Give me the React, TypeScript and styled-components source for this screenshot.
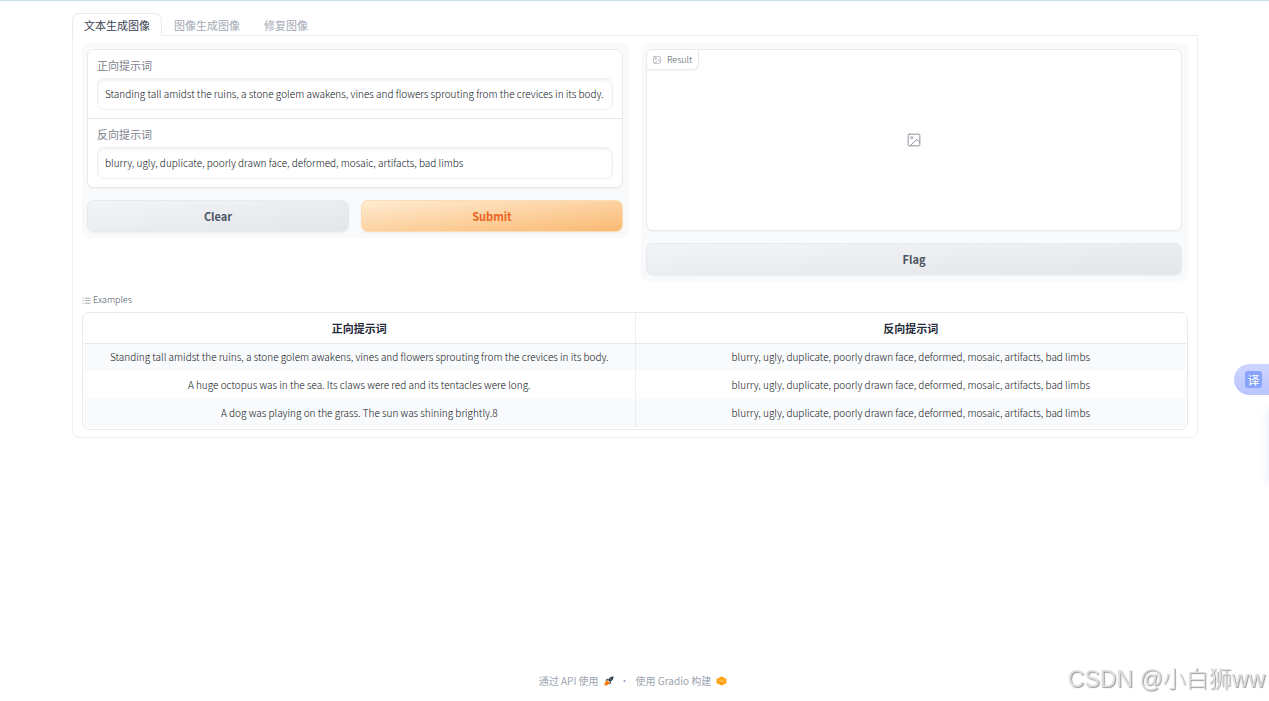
import React from "react";
import styled, { createGlobalStyle } from "styled-components";

const Global = createGlobalStyle`
  *, *::before, *::after { box-sizing: border-box; }
  body { margin: 0; background: #fff; }
  body, button, input {
    font-family: "Noto Sans CJK SC", "Noto Sans", sans-serif;
  }
`;

const Page = styled.div`
  min-height: 100vh;
  display: flex;
  flex-direction: column;
  padding: 12px 71px 12px 72px;
  border-top: 1px solid #cbe0e8;
  color: #374151;
  font-size: 11px;
  line-height: 16px;
`;

const TabList = styled.div`
  display: flex;
  position: relative;
  z-index: 1;
  margin-bottom: -1px;
`;

const Tab = styled.button<{ $active?: boolean }>`
  height: 23px;
  padding: 0 11px;
  border: 1px solid ${(p) => (p.$active ? "#e9ebee" : "transparent")};
  border-bottom: 0;
  border-radius: 7px 7px 0 0;
  background: ${(p) => (p.$active ? "#fff" : "transparent")};
  color: ${(p) => (p.$active ? "#374151" : "#a3a9b4")};
  font-size: 11px;
  line-height: 20px;
`;

const Panel = styled.main`
  border: 1px solid #eceef1;
  border-radius: 0 0 7px 7px;
  padding: 7px 9px;
`;

const Columns = styled.div`
  display: flex;
  align-items: flex-start;
  gap: 12px;
`;

const Group = styled.section`
  flex: 1 1 0;
  min-width: 0;
  display: flex;
  flex-direction: column;
  gap: 12px;
  padding: 6px 6px 6px 5px;
  border-radius: 6px;
  background: #f9fafb;
`;

const Card = styled.div`
  border: 1px solid #e8eaed;
  border-radius: 7px;
  background: #fff;
  overflow: hidden;
  box-shadow: 0 1px 2px rgba(0, 0, 0, 0.04);
`;

const Field = styled.label`
  display: block;
  padding: 7px 9px 8px;
  & + & { border-top: 1px solid #e5e7eb; }
`;

const FieldName = styled.span`
  display: block;
  margin-bottom: 5px;
  color: #7b818c;
`;

const TextInput = styled.input`
  display: block;
  width: 100%;
  height: 32px;
  padding: 0 7px 1px;
  border: 1px solid #eceef1;
  border-radius: 7px;
  box-shadow: inset 0 2px 3px rgba(0, 0, 0, 0.05);
  color: #0b1220;
  background: #fff;
  font-size: 10px;
  font-weight: 300;
`;

const Actions = styled.div`
  display: flex;
  gap: 12px;
`;

const Button = styled.button<{ $primary?: boolean }>`
  flex: 1;
  height: 32px;
  border: 1px solid ${(p) => (p.$primary ? "#fbdcb4" : "#e8eaed")};
  border-radius: 7px;
  background: ${(p) =>
    p.$primary
      ? "linear-gradient(to bottom right, #ffecd2, #fab972)"
      : "linear-gradient(to bottom right, #f3f4f6, #e4e5e9)"};
  color: ${(p) => (p.$primary ? "#ea6420" : "#4b5563")};
  box-shadow: 0 1px 2px rgba(0, 0, 0, 0.05);
  font-size: 11px;
  font-weight: 600;
  line-height: 20px;
`;

const Result = styled(Card)`
  position: relative;
  height: 182px;
  display: grid;
  place-items: center;
  color: #8d929c;
`;

const ResultLabel = styled.div`
  position: absolute;
  top: 0;
  left: 0;
  display: flex;
  align-items: center;
  gap: 6px;
  height: 20px;
  padding: 0 6px;
  border: solid #e8eaed;
  border-width: 0 1px 1px 0;
  border-radius: 0 0 6px 0;
  box-shadow: 0 1px 2px rgba(0, 0, 0, 0.05);
  color: #4b5563;
  font-size: 9px;
  font-weight: 300;
`;

const ExamplesLabel = styled.div`
  display: flex;
  align-items: center;
  gap: 2px;
  margin: 11px 0 4px;
  color: #4b5563;
  font-size: 9px;
  font-weight: 300;
`;

const TableFrame = styled.div`
  border: 1px solid #e9ebee;
  border-radius: 7px;
  overflow: hidden;
  padding: 0 1px 1px;
`;

const Table = styled.table`
  width: 100%;
  border-collapse: collapse;
  table-layout: fixed;
  text-align: center;
`;

const HeadCell = styled.th`
  height: 30px;
  padding: 0;
  border-bottom: 1px solid #e5e7eb;
  color: #1f2937;
  font-weight: 700;
  & + & { border-left: 1px solid #eceef1; }
`;

const Row = styled.tr`
  &:nth-child(odd) { background: #f9fafb; }
`;

const Cell = styled.td`
  height: 28px;
  padding: 0;
  border-bottom: 1px solid transparent;
  color: #0b1220;
  font-size: 10px;
  font-weight: 300;
  & + & { border-left: 1px solid #eceef1; }
`;

const Footer = styled.footer`
  display: flex;
  justify-content: center;
  align-items: center;
  gap: 6px;
  margin-top: auto;
  padding-right: 4px;
  color: #9ca3af;
  font-size: 10px;
`;

const FooterLink = styled.a`
  display: flex;
  align-items: center;
  gap: 5px;
  color: inherit;
  text-decoration: none;
`;

const Translate = styled.button`
  position: fixed;
  top: 364px;
  right: 0;
  width: 35px;
  height: 31px;
  padding: 0 0 0 11px;
  border: 0;
  border-radius: 16px 0 0 16px;
  background: linear-gradient(#cdd6ff, #bac4ff);
`;

const TranslateMark = styled.span`
  display: block;
  width: 17px;
  height: 17px;
  border-radius: 3px;
  background: #88a4fa;
  color: #fff;
  font-size: 12px;
  line-height: 17px;
  text-align: center;
`;

const EdgeGlow = styled.div`
  position: fixed;
  top: 408px;
  right: -4px;
  width: 4px;
  height: 74px;
  box-shadow: 0 0 8px rgba(90, 150, 240, 0.25);
`;

const Watermark = styled.div`
  position: fixed;
  right: 4px;
  bottom: 6px;
  color: #dedede;
  font: 300 23px/32px "Liberation Sans", "Noto Sans CJK SC", sans-serif;
  text-shadow: 1px 1px 1px #999;
  white-space: nowrap;
`;

const ImageIcon = ({ size }: { size: number }) => (
  <svg width={size} height={size} viewBox="0 0 24 24" fill="none" stroke="#8d929c" strokeWidth="1.7" strokeLinecap="round" strokeLinejoin="round" aria-hidden="true">
    <rect x="2" y="2" width="20" height="20" rx="2" />
    <circle cx="8" cy="8" r="1.7" />
    <path d="M22 16l-5-5L5 22" />
  </svg>
);

const ListIcon = () => (
  <svg width="9" height="9" viewBox="0 0 32 32" fill="#8d929c" aria-hidden="true">
    <path d="M10 6h20v3H10zM10 15h20v3H10zM10 24h20v3H10zM2 6h4v3H2zM2 15h4v3H2zM2 24h4v3H2z" />
  </svg>
);

const RocketIcon = () => (
  <svg width="10" height="10" viewBox="0 0 20 20" aria-hidden="true">
    <path d="M19 1c-5 0-8 2-11 7l4 4c5-3 7-6 7-11z" fill="#273444" />
    <path d="M9 6c-3-1-5 1-6 4l4-1zM14 11c1 3-1 5-4 6l1-4z" fill="#475569" />
    <path d="M7 9l4 4c-1 5-5 6-10 6 0-5 1-9 6-10z" fill="#ff7c00" />
    <circle cx="14" cy="6" r="1.4" fill="#94a3b8" />
  </svg>
);

const GradioIcon = () => (
  <svg width="11" height="10" viewBox="0 0 22 20" aria-hidden="true">
    <path d="M11 1l10 5v3l-2 1 2 1v3l-10 5-10-5v-3l2-1-2-1V6z" fill="#ff9700" />
    <path d="M3 7l8 4 8-4M5 13l6-3 6 3" fill="none" stroke="#ffd98a" strokeWidth="1.3" />
    <path d="M6 5l5 2.500 5-2.500" fill="none" stroke="#ffc860" strokeWidth="1.2" />
  </svg>
);

const POSITIVE = "正向提示词";
const NEGATIVE = "反向提示词";
const GOLEM =
  "Standing tall amidst the ruins, a stone golem awakens, vines and flowers sprouting from the crevices in its body.";
const AVOID = "blurry, ugly, duplicate, poorly drawn face, deformed, mosaic, artifacts, bad limbs";
const EXAMPLES = [
  GOLEM,
  "A huge octopus was in the sea. Its claws were red and its tentacles were long.",
  "A dog was playing on the grass. The sun was shining brightly.8",
];

export default function App() {
  return (
    <>
      <Global />
      <Page>
        <TabList role="tablist">
          <Tab role="tab" aria-selected $active>文本生成图像</Tab>
          <Tab role="tab">图像生成图像</Tab>
          <Tab role="tab">修复图像</Tab>
        </TabList>
        <Panel>
          <Columns>
            <Group>
              <Card>
                <Field>
                  <FieldName>{POSITIVE}</FieldName>
                  <TextInput defaultValue={GOLEM} />
                </Field>
                <Field>
                  <FieldName>{NEGATIVE}</FieldName>
                  <TextInput defaultValue={AVOID} />
                </Field>
              </Card>
              <Actions>
                <Button>Clear</Button>
                <Button $primary>Submit</Button>
              </Actions>
            </Group>
            <Group>
              <Result>
                <ResultLabel><ImageIcon size={8} />Result</ResultLabel>
                <ImageIcon size={14} />
              </Result>
              <Actions>
                <Button>Flag</Button>
              </Actions>
            </Group>
          </Columns>
          <ExamplesLabel><ListIcon />Examples</ExamplesLabel>
          <TableFrame>
            <Table>
              <thead>
                <tr>
                  <HeadCell>{POSITIVE}</HeadCell>
                  <HeadCell>{NEGATIVE}</HeadCell>
                </tr>
              </thead>
              <tbody>
                {EXAMPLES.map((text) => (
                  <Row key={text}>
                    <Cell>{text}</Cell>
                    <Cell>{AVOID}</Cell>
                  </Row>
                ))}
              </tbody>
            </Table>
          </TableFrame>
        </Panel>
        <Footer>
          <FooterLink href="#api">通过 API 使用 <RocketIcon /></FooterLink>
          <span>·</span>
          <FooterLink href="#gradio">使用 Gradio 构建 <GradioIcon /></FooterLink>
        </Footer>
      </Page>
      <Translate aria-label="译"><TranslateMark>译</TranslateMark></Translate>
      <EdgeGlow />
      <Watermark>CSDN @小白狮ww</Watermark>
    </>
  );
}
